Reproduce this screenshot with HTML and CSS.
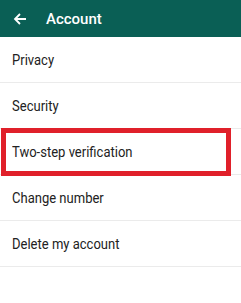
FILE: index.html
```html
<!DOCTYPE html>
<html>

<head>
  <title>Account</title>
  <link rel="stylesheet" href="styles.css">
</head>

<body>
  <div class="toolbar">
    <svg class="back-icon" width="14" height="14" viewBox="0 0 14 14">
      <path d="M13 7H2M7 2L2 7l5 5" fill="none" stroke="#fff" stroke-width="1.8" />
    </svg>
    <span class="toolbar-title">Account</span>
  </div>

  <div class="settings-list">
    <div class="settings-row"><span class="row-label">Privacy</span></div>
    <div class="settings-row"><span class="row-label">Security</span></div>
    <div class="settings-row">
      <span class="row-label">Two-step verification</span>
      <div class="highlight-box"></div>
    </div>
    <div class="settings-row"><span class="row-label">Change number</span></div>
    <div class="settings-row"><span class="row-label">Delete my account</span></div>
  </div>
</body>

</html>
```

FILE: styles.css
```css
body {
  margin: 0;
  padding: 0;
  background-color: #fff;
  font-family: Roboto, "Liberation Sans", sans-serif;
  color: #222;
}

.toolbar {
  height: 37px;
  background-color: #0a5f55;
  display: flex;
  align-items: center;
  padding-left: 13px;
  box-sizing: border-box;
}

.back-icon {
  margin-right: 19px;
}

.toolbar-title {
  color: #fff;
  font-size: 15px;
  font-weight: 500;
}

.settings-row {
  height: 45px;
  border-bottom: 1px solid #ebebeb;
  display: flex;
  align-items: center;
  padding-left: 12px;
  position: relative;
}

/* the screenshot text is a bit narrow, squeeze it */
.row-label {
  display: inline-block;
  font-size: 15.5px;
  transform: scaleX(0.84);
  transform-origin: left center;
  white-space: nowrap;
}

.highlight-box {
  position: absolute;
  left: 1px;
  top: -1px;
  width: 230px;
  height: 48px;
  border: 5px solid #e0202a;
  box-sizing: border-box;
}
```
